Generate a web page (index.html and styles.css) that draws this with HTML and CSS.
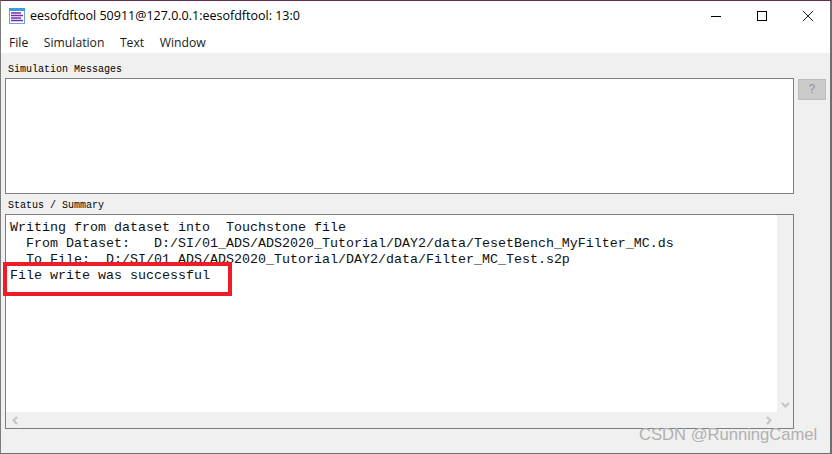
FILE: index.html
```html
<!DOCTYPE html>
<html lang="en">
<head>
<meta charset="utf-8">
<title>eesofdftool</title>
<link rel="stylesheet" href="styles.css">
</head>
<body>
<div class="window">
  <header class="titlebar">
    <svg class="app-icon" width="16" height="16" viewBox="0 0 16 16">
      <rect x="0.5" y="0.5" width="15" height="15" fill="#fff" stroke="#6aa5d8"/>
      <rect x="0" y="0" width="16" height="3" fill="#3f9be0"/>
      <path d="M2 5h10M2 7.5h12M2 10h10M2 12.500h12" stroke="#6a2fa8" stroke-width="1.400" fill="none"/>
    </svg>
    <span class="title">eesofdftool 50911@127.0.0.1:eesofdftool: 13:0</span>
    <div class="controls">
      <svg width="10" height="10" viewBox="0 0 10 10"><path d="M0 5.500h10" stroke="#000"/></svg>
      <svg width="10" height="10" viewBox="0 0 10 10"><rect x="0.500" y="0.500" width="9" height="9" fill="none" stroke="#000"/></svg>
      <svg width="10" height="10" viewBox="0 0 10 10"><path d="M0 0l10 10M10 0L0 10" stroke="#000" stroke-width="0.900"/></svg>
    </div>
  </header>
  <nav class="menubar">
    <span>File</span><span>Simulation</span><span>Text</span><span>Window</span>
  </nav>
  <main class="content">
    <div class="label">Simulation Messages</div>
    <div class="row">
      <div class="box messages"></div>
      <button class="help" type="button">?</button>
    </div>
    <div class="label status-label">Status / Summary</div>
    <div class="row">
      <div class="box summary">
        <div class="summary-main">
          <pre class="log">Writing from dataset into  Touchstone file
  From Dataset:   D:/SI/01_ADS/ADS2020_Tutorial/DAY2/data/TesetBench_MyFilter_MC.ds
  To File:  D:/SI/01_ADS/ADS2020_Tutorial/DAY2/data/Filter_MC_Test.s2p
File write was successful</pre>
          <div class="vscroll">
            <svg width="9" height="6" viewBox="0 0 9 6"><path d="M1 1l3.500 3.500L8 1" fill="none" stroke="#c4c4c4" stroke-width="2"/></svg>
          </div>
        </div>
        <div class="hscroll">
          <svg width="6" height="9" viewBox="0 0 6 9"><path d="M5 1L1.500 4.500L5 8" fill="none" stroke="#c4c4c4" stroke-width="2"/></svg>
          <svg width="6" height="9" viewBox="0 0 6 9"><path d="M1 1l3.500 3.500L1 8" fill="none" stroke="#c4c4c4" stroke-width="2"/></svg>
        </div>
      </div>
      <div class="help-spacer"></div>
    </div>
  </main>
  <div class="highlight"></div>
  <div class="watermark">CSDN @RunningCamel</div>
</div>
</body>
</html>
```
FILE: styles.css
```css
* { box-sizing: border-box; }
html, body { margin: 0; padding: 0; }
body { width: 832px; height: 454px; overflow: hidden; background: #efefef; }
.window {
  position: relative;
  width: 832px;
  height: 454px;
  display: flex;
  flex-direction: column;
  background: #f0f0f0;
  border-left: 1px solid #7c7c7c;
  border-right: 2px solid #6e6e6e;
  border-bottom: 1px solid #6e6e6e;
  border-top: 1px solid #6b2a55;
  font-family: "Open Sans", "Noto Sans", sans-serif;
}
.titlebar {
  height: 29px;
  display: flex;
  align-items: center;
  background: #fff;
  padding-left: 8px;
  color: #000;
}
.app-icon { flex: none; margin-right: 5px; margin-top: 1px; }
.title { font-size: 12.5px; }
.controls {
  margin-left: auto;
  display: flex;
  gap: 36px;
  padding-right: 17px;
  margin-top: 1px;
}
.menubar {
  height: 23px;
  display: flex;
  gap: 15.5px;
  align-items: center;
  background: #fff;
  padding: 2px 0 0 8px;
  font-size: 12.2px;
  color: #1a1a1a;
}
.content { flex: 1; display: flex; flex-direction: column; padding: 0 0 0 4px; }
.label {
  height: 25px;
  padding: 11px 0 0 3px;
  font-family: "Liberation Mono", monospace;
  font-size: 10px;
  line-height: 11px;
  color: #000;
}
.status-label { height: 20px; padding-top: 6px; }
.row { display: flex; align-items: flex-start; }
.box { width: 789px; border: 1px solid #7d7d7d; background: #fff; }
.messages { height: 116px; }
.help {
  width: 28px;
  height: 21px;
  margin: 1px 0 0 4px;
  padding: 0;
  border: 1px solid #bcbcbc;
  background: #cbcbcb;
  color: #8f8f8f;
  font-family: "Liberation Mono", monospace;
  font-size: 12px;
  font-weight: 400;
}
.help-spacer { width: 32px; }
.summary { height: 215px; display: flex; flex-direction: column; background: #f0f0f0; }
.summary-main { flex: 1; display: flex; min-height: 0; }
.log {
  flex: 1;
  margin: 0;
  padding: 5px 0 0 4px;
  background: #fff;
  font-family: "Liberation Mono", monospace;
  font-size: 13.33px;
  line-height: 16px;
  color: #111;
  overflow: hidden;
}
.vscroll {
  width: 16px;
  display: flex;
  align-items: flex-end;
  justify-content: center;
  padding-bottom: 4px;
}
.hscroll {
  height: 16px;
  flex: none;
  display: flex;
  align-items: center;
  justify-content: space-between;
  padding: 0 21px 0 6px;
}
.highlight {
  position: absolute;
  left: 2px;
  top: 261px;
  width: 229px;
  height: 34px;
  border: 4px solid #ee1c25;
  pointer-events: none;
}
.watermark {
  position: absolute;
  left: 638px;
  top: 423px;
  font-family: "Liberation Sans", sans-serif;
  font-size: 16.6px;
  line-height: 22px;
  color: #b0b0b0;
  white-space: nowrap;
}
```
